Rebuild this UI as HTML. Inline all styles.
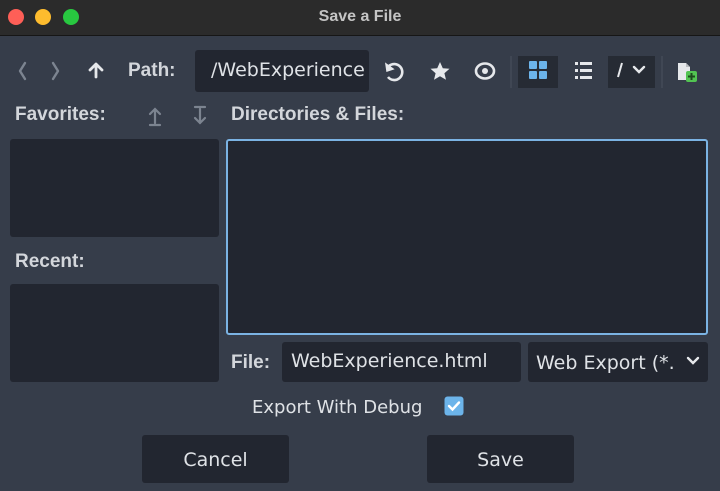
<!DOCTYPE html>
<html><head><style>
*{margin:0;padding:0;box-sizing:border-box}
body{width:720px;height:491px;overflow:hidden;background:#363d4a;font-family:"Liberation Sans","DejaVu Sans",sans-serif;color:#d6d9de;position:relative}
.a{position:absolute}
.tb{left:0;top:0;width:720px;height:36px;background:#2b2b2b;border-bottom:1px solid #161616}
.dot{width:16px;height:16px;border-radius:50%;top:9px}
.t{font-size:16px;font-weight:bold;color:#c4c4c4;left:0;width:720px;text-align:center;top:8px}
.pan{background:#222630;border-radius:3px}
.lbl{font-size:19px;font-weight:bold;color:#d3d6db}
.txt{font-size:19px;color:#dfe2e6;font-family:"DejaVu Sans",sans-serif}
</style></head><body>
<div class="a tb"></div>
<div class="a dot" style="left:8px;background:#fe5f57"></div>
<div class="a dot" style="left:35px;background:#febc2e"></div>
<div class="a dot" style="left:63px;background:#28c840"></div>
<div class="a t">Save a File</div>

<svg class="a" style="left:14px;top:60px" width="100" height="22" viewBox="0 0 100 22" fill="none" stroke-linecap="round" stroke-linejoin="round">
<path d="M11 3 L6 11 L11 19" stroke="#7c8490" stroke-width="2.4"/>
<path d="M39 3 L44 11 L39 19" stroke="#7c8490" stroke-width="2.4"/>
<path d="M82 17 V5 M76 10 L82 4 L88 10" stroke="#e6e8eb" stroke-width="2.8"/>
</svg>
<div class="a lbl" style="left:128px;top:60px">Path:</div>
<div class="a pan" style="left:195px;top:50px;width:174px;height:42px"></div>
<div class="a txt" style="left:211px;top:59px">/WebExperience</div>

<svg class="a" style="left:380px;top:56px" width="320" height="32" viewBox="0 0 320 32" fill="none">
<path d="M9 10 A8 8 0 1 1 8 21" stroke="#e6e8eb" stroke-width="2.6"/><path d="M6 8 L7 15 L13 13 Z" fill="#e6e8eb" stroke="#e6e8eb" stroke-width="1.5"/>
<path d="M60 6 L62.8 12.2 L69.5 12.8 L64.4 17.2 L66 23.8 L60 20.3 L54 23.8 L55.6 17.2 L50.5 12.8 L57.2 12.2 Z" fill="#e6e8eb"/>
<ellipse cx="105" cy="15" rx="9" ry="7.5" stroke="#e6e8eb" stroke-width="2.6"/><circle cx="105" cy="15" r="3" fill="#e6e8eb"/>
<line x1="131" y1="-4" x2="131" y2="34" stroke="#4a515d" stroke-width="1"/>
<rect x="138" y="-6" width="40" height="40" rx="3" fill="#262b34"/>
<rect x="149" y="5" width="8" height="8" rx="1" fill="#6cb4ea"/><rect x="159" y="5" width="8" height="8" rx="1" fill="#6cb4ea"/>
<rect x="149" y="15" width="8" height="8" rx="1" fill="#6cb4ea"/><rect x="159" y="15" width="8" height="8" rx="1" fill="#6cb4ea"/>
<g fill="#e6e8eb"><rect x="195" y="6" width="3" height="3"/><rect x="200" y="6" width="12" height="3"/><rect x="195" y="13" width="3" height="3"/><rect x="200" y="13" width="12" height="3"/><rect x="195" y="20" width="3" height="3"/><rect x="200" y="20" width="12" height="3"/></g>
<rect x="228" y="-6" width="47" height="40" rx="3" fill="#262b34"/>
<path d="M242 7 L238 21" stroke="#e6e8eb" stroke-width="2"/><path d="M254 11 L259 16 L264 11" stroke="#e6e8eb" stroke-width="2.4" stroke-linecap="round"/>
<line x1="282" y1="-4" x2="282" y2="34" stroke="#4a515d" stroke-width="1"/>
<path d="M298 7 H306 L310 11 V24 H298 Z" fill="#e6e8eb"/><path d="M306 7 V11 H310" fill="#b9bcc0"/>
<rect x="306" y="15" width="11" height="11" rx="2" fill="#52c452"/><path d="M311.5 17 V24 M308 20.5 H315" stroke="#1d4a1d" stroke-width="2"/>
</svg>

<div class="a lbl" style="left:15px;top:104px">Favorites:</div>
<svg class="a" style="left:146px;top:104px" width="64" height="24" viewBox="0 0 64 24" fill="none" stroke="#7c8490" stroke-width="2.2" stroke-linecap="round">
<path d="M9 19 V5 M4 10 L9 5 L14 10 M4 21 H14"/><path d="M54 5 V19 M49 14 L54 19 L59 14 M49 3 H59"/>
</svg>
<div class="a lbl" style="left:231px;top:104px">Directories &amp; Files:</div>
<div class="a pan" style="left:10px;top:139px;width:209px;height:98px"></div>
<div class="a lbl" style="left:15px;top:251px">Recent:</div>
<div class="a pan" style="left:10px;top:284px;width:209px;height:98px"></div>
<div class="a pan" style="left:226px;top:139px;width:482px;height:196px;border:2px solid #7bb3e3"></div>

<div class="a lbl" style="left:231px;top:352px">File:</div>
<div class="a pan" style="left:282px;top:342px;width:239px;height:40px"></div>
<div class="a txt" style="left:291px;top:350px">WebExperience.html</div>
<div class="a pan" style="left:528px;top:342px;width:180px;height:40px"></div>
<div class="a txt" style="left:536px;top:352px">Web Export (*.</div>
<svg class="a" style="left:684px;top:354px" width="18" height="14" viewBox="0 0 18 14" fill="none"><path d="M4 4 L9 9 L14 4" stroke="#e6e8eb" stroke-width="2.4" stroke-linecap="round"/></svg>

<div class="a txt" style="left:252px;top:397px;font-size:18px">Export With Debug</div>
<svg class="a" style="left:444px;top:396px" width="21" height="21" viewBox="0 0 21 21"><rect x="0.5" y="0.5" width="19" height="19" rx="3" fill="#6cb4ea"/><path d="M5 10 L8.5 13.5 L15 6.5" stroke="#fff" stroke-width="2.4" fill="none" stroke-linecap="round"/></svg>

<div class="a pan" style="left:142px;top:435px;width:147px;height:48px"></div>
<div class="a txt" style="left:142px;top:449px;width:147px;text-align:center">Cancel</div>
<div class="a pan" style="left:427px;top:435px;width:147px;height:48px"></div>
<div class="a txt" style="left:427px;top:449px;width:147px;text-align:center">Save</div>
</body></html>
